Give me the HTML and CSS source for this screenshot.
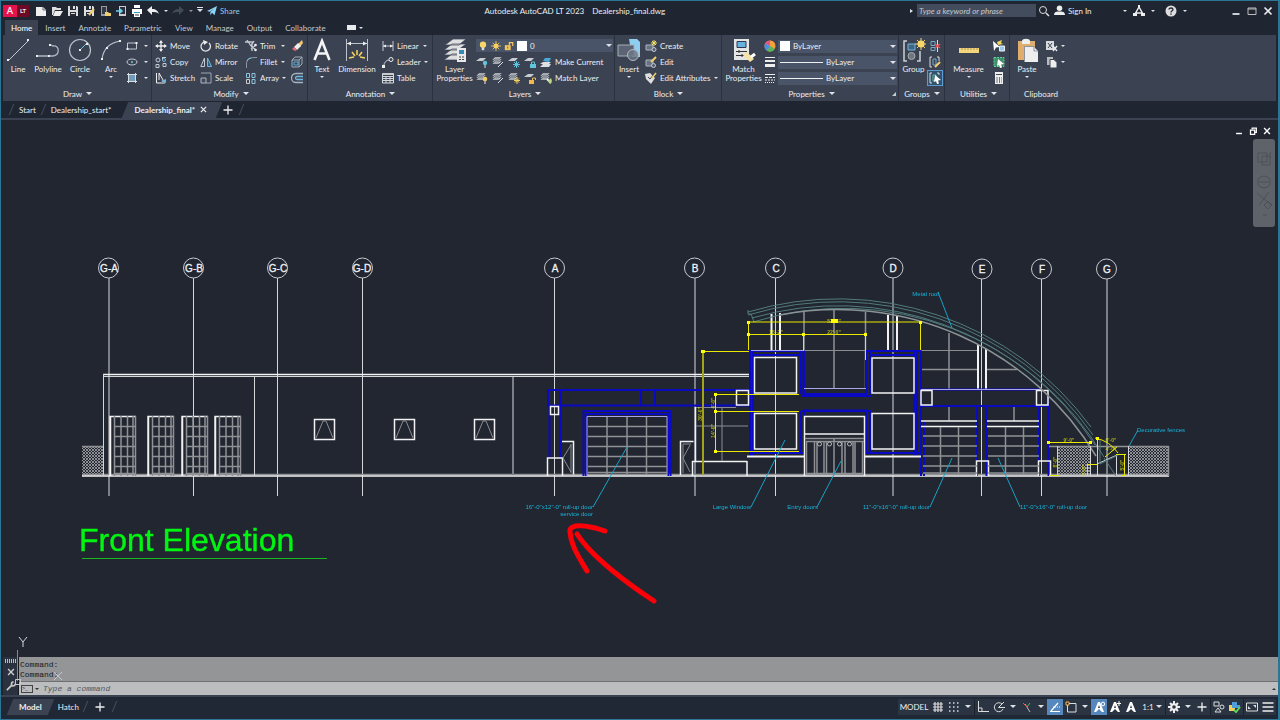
FILE: index.html
```html
<!DOCTYPE html>
<html lang="en">
<head>
  <meta charset="UTF-8">
  <meta name="viewport" content="width=device-width, initial-scale=1">
  <title>Autodesk AutoCAD LT 2023 - Dealership_final.dwg</title>
  <link rel="stylesheet" href="styles.css">
</head>
<body>
  <!-- Icon sprite -->
  <svg class="sprite" aria-hidden="true">
    <symbol id="new" viewBox="0 0 12 12"><path fill="#eee" d="M1 2h7l3 3v6H1z"/><path d="M8 2v3h3" fill="none" stroke="#667"/></symbol>
    <symbol id="open" viewBox="0 0 12 12"><path fill="#ddd" d="M1 2h4l1 1h4v2H4l-2 5H1z"/><path fill="#eee" d="M4 6h8l-3 5H2z"/></symbol>
    <symbol id="save" viewBox="0 0 12 12"><path fill="#ddd" d="M1 1h9l1 1v9H1z"/><path fill="#252c38" d="M3 1h6v4H3zM3 7h6v4H3z"/><path fill="#ddd" d="M6 1h2v3H6zM4 8h4v1H4z"/></symbol>
    <symbol id="saveas" viewBox="0 0 12 12"><use href="#save"/><path d="M6 10l5-6" stroke="#f3cf73" stroke-width="2"/></symbol>
    <symbol id="web" viewBox="0 0 12 12"><path fill="#999" d="M2 1h6v10H2z"/><path fill="#333a45" d="M3 2h4v7H3z"/><path fill="#f3cf73" d="M6 7h3l1 1h2v3H6z"/></symbol>
    <symbol id="mobile" viewBox="0 0 12 12"><path fill="#ccc" d="M4 1h7v10H4z"/><path fill="#29303c" d="M5 2h5v7H5z"/><path fill="none" stroke="#6fd0e8" stroke-width="1.5" d="M1 6h6M5 4l2 2-2 2"/></symbol>
    <symbol id="print" viewBox="0 0 12 12"><path fill="#fff" d="M3 0h6v3H3zM1 4h10v5H1zM3 8h6v4H3z"/><path stroke="#2fa0c8" d="M3 7.500h6"/><path stroke="#333" d="M4 10h4"/></symbol>
    <symbol id="undo" viewBox="0 0 12 12"><path fill="currentColor" d="M0 5l5-4v3c4 0 6 2 7 5-2-2-4-2-7-2v3z"/></symbol>
    <symbol id="plane" viewBox="0 0 12 12"><path fill="#8ed2f5" d="M0 6L12 0 9 11 6 8l-2 3V7l5-4-6 4z"/></symbol>
    <symbol id="search" viewBox="0 0 12 12"><circle cx="5" cy="5" r="3.500" fill="none" stroke="#ddd"/><path stroke="#ddd" stroke-width="1.500" d="M8 8l3 3"/></symbol>
    <symbol id="user" viewBox="0 0 12 12"><circle cx="6" cy="3.500" r="3" fill="#eee"/><path fill="#eee" d="M0 11c0-3 2-4 4-4h4c2 0 4 1 4 4z"/></symbol>
    <symbol id="apps" viewBox="0 0 12 12"><path fill="none" stroke="#eee" stroke-width="1.500" d="M6 2L2 9M6 2l4 7M3 8h6"/><path fill="#eee" d="M5 0h2v3H5zM0 8h4v3H0zM8 8h4v3H8z"/></symbol>
    <symbol id="help" viewBox="0 0 12 12"><circle cx="6" cy="6" r="5.500" fill="#ddd"/><path fill="none" stroke="#222936" stroke-width="1.300" d="M4 4.500c0-2 4-2 4 0 0 1.500-2 1-2 3M6 8.500v1.300"/></symbol>
    <symbol id="min" viewBox="0 0 12 12"><path stroke="currentColor" stroke-width="1.700" d="M2.500 9h7"/></symbol>
    <symbol id="max" viewBox="0 0 12 12"><path fill="none" stroke="#bbb" d="M2 3h8v6.500H2zM2 4h8"/></symbol>
    <symbol id="x" viewBox="0 0 12 12"><path stroke="currentColor" stroke-width="1.600" d="M2.500 2.500l7 7M9.500 2.500l-7 7"/></symbol>
    <symbol id="restore" viewBox="0 0 12 12"><path fill="none" stroke="#fff" stroke-width="1.500" d="M3 5h5v5H3zM5 4V2.500h5v5H8"/></symbol>
    <symbol id="plus" viewBox="0 0 12 12"><path stroke="#eee" stroke-width="1.300" d="M6 1.500v9M1.500 6h9"/></symbol>

    <symbol id="line" viewBox="0 0 24 24"><path stroke="#c5cad2" d="M3 22L22 3"/><path fill="#eee" d="M1 21h2v2H1zM21 1h2v2h-2z"/></symbol>
    <symbol id="polyline" viewBox="0 0 24 24"><path fill="none" stroke="#aeb5c0" stroke-width="1.300" d="M1 18h16c7-1 7-11 0-10l-2-1"/><path fill="#eee" d="M0 17h2v2H0zM12 17h2v2h-2zM13 6h2v2h-2z"/></symbol>
    <symbol id="circle" viewBox="0 0 24 24"><circle cx="12" cy="12" r="10.500" fill="none" stroke="#bcc3cc" stroke-width="1.200"/><path stroke="#73c6e0" d="M12 12l6-6"/><path fill="#eee" d="M11 11h2v2h-2zM18 5h2v2h-2z"/></symbol>
    <symbol id="arc" viewBox="0 0 24 24"><path fill="none" stroke="#bcc3cc" stroke-width="1.200" d="M3 21Q5 6 21 3"/><path fill="#eee" d="M2 20h2v2H2zM7 9h2v2H7zM20 2h2v2h-2z"/></symbol>
    <symbol id="rect" viewBox="0 0 12 12"><path fill="none" stroke="#c5cad2" d="M1.500 3h9v6h-9z"/><path fill="#eee" d="M9.500 2h2v2h-2zM.5 8h2v2h-2z"/></symbol>
    <symbol id="ellipse" viewBox="0 0 12 12"><ellipse cx="6" cy="6" rx="5" ry="3" fill="none" stroke="#c5cad2"/><circle cx="6" cy="6" r="1" fill="#73c6e0"/></symbol>
    <symbol id="hatch" viewBox="0 0 12 12"><path fill="#6f9cbb" d="M3 3h6v6H3z"/><path fill="none" stroke="#d9dde2" d="M2.500 1v10M9.500 1v10M1 2.500h10M1 9.500h10"/></symbol>
    <symbol id="move" viewBox="0 0 12 12"><path stroke="#eee" stroke-width="1.300" d="M6 1v10M1 6h10"/><path fill="#eee" d="M6 0l2 3H4zM6 12l2-3H4zM0 6l3-2v4zM12 6L9 4v4z"/></symbol>
    <symbol id="copy" viewBox="0 0 12 12"><g fill="none" stroke="#c5cad2"><circle cx="3" cy="4" r="2"/><path d="M1 8.500h3v3H1zM7 1.500h4M7.500 1v3M8 7.500h3v3H8z"/><circle cx="9" cy="4" r="1.500" stroke="#73b6dd"/></g></symbol>
    <symbol id="stretch" viewBox="0 0 12 12"><path fill="none" stroke="#eee" d="M1.500 1v10H10M4 1v7M4 1l4 7v2"/><path fill="#73b6dd" d="M6 9l5-2v4z"/></symbol>
    <symbol id="rotate" viewBox="0 0 12 12"><path fill="none" stroke="#eee" stroke-width="1.200" d="M4 2a4.700 4.700 0 1 0 5 1"/><path fill="#eee" d="M3 0l5 2-4 3z"/></symbol>
    <symbol id="mirror" viewBox="0 0 12 12"><path fill="none" stroke="#c5cad2" d="M4.500 2v8.500H.8z"/><path fill="#315f7d" stroke="#73b6dd" d="M7.500 2v8.500h4z"/></symbol>
    <symbol id="scale" viewBox="0 0 12 12"><path fill="none" stroke="#9ea7b5" d="M1 1h10v10H6"/><path fill="#424b5b" stroke="#aeb5c0" d="M1 6h5v5H1z"/></symbol>
    <symbol id="trim" viewBox="0 0 12 12"><path stroke="#c5cad2" stroke-width="1.300" d="M0 2h6M7 1v10M2 0l4 6M5 5l6 5M11 5L6 9M9 1l-3 5"/><circle cx="10.500" cy="5" r="1.300" fill="#eee"/><circle cx="10.500" cy="10" r="1.300" fill="#eee"/></symbol>
    <symbol id="fillet" viewBox="0 0 12 12"><path fill="none" stroke="#8d96a5" d="M1.500 12V7Q2 2 9 1.500h3"/><path fill="none" stroke="#73c6e0" d="M2 5q1-3 4-3"/></symbol>
    <symbol id="array" viewBox="0 0 12 12"><g fill="none" stroke="#8fc4df"><path d="M1.500 1.500h3v4h-3zM7 1.500h3v4H7zM7 7.500h3v4H7z"/><path stroke="#ccc" d="M1.500 7.500h3v4h-3z"/></g></symbol>
    <symbol id="erase" viewBox="0 0 12 12"><path fill="#f2c46d" d="M7 4l4-4 1 3-3 4z"/><path fill="#eee" d="M3 7l4-4 3 3-4 4z"/><path fill="#e86b72" d="M1 9l2-2 3 3-2 1z"/></symbol>
    <symbol id="explode" viewBox="0 0 12 12"><path fill="none" stroke="#9eabb9" d="M1 4h7v7H1zM1 4l3-3h7L8 4M11 1v7l-3 3"/><path fill="none" stroke="#57aee0" d="M3 6h4v3H3z"/></symbol>
    <symbol id="offset" viewBox="0 0 12 12"><path fill="none" stroke="#a7b2c0" stroke-width="1.300" d="M12 1.500H5a4.500 4.500 0 0 0 0 9h7"/><path fill="none" stroke="#73b6dd" stroke-width="1.300" d="M12 4.500H6a1.500 1.500 0 0 0 0 3h6"/></symbol>
    <symbol id="text" viewBox="0 0 24 24"><path fill="none" stroke="#f4f4f4" stroke-width="2.600" d="M4.500 22L12 3l7.500 19M7 15.500h10"/></symbol>
    <symbol id="dimension" viewBox="0 0 24 24"><path fill="none" stroke="#bcc3cc" d="M1.500 1v22M22.500 1v22M2 5.500h20"/><path fill="#eee" d="M2 5.500l4-2v4zM22 5.500l-4-2v4z"/><path stroke="#f3cf5d" stroke-width="1.600" d="M12 12v5M7 14l3 4M17 14l-3 4M4 20l5-1M20 20l-5-1"/></symbol>
    <symbol id="linear" viewBox="0 0 12 12"><path fill="none" stroke="#c5cad2" d="M1 1v10M11 1v10M1 6h10"/><path fill="#eee" d="M1 6l3-1.500v3zM11 6L8 4.500v3z"/></symbol>
    <symbol id="leader" viewBox="0 0 12 12"><path fill="none" stroke="#c5cad2" d="M1.500 10Q3 4 7 4"/><circle cx="9" cy="3.500" r="2" fill="none" stroke="#eee"/><path fill="#eee" d="M0 9h3v3H0z"/></symbol>
    <symbol id="table" viewBox="0 0 12 12"><path fill="none" stroke="#d6d9de" d="M.5 1.500h11v9.500H.5zM.5 4.500h11M.5 6.500h11M.5 8.500h11M4 4v7M8 4v7"/><path fill="#ccc" d="M1 1h10v2H1z"/></symbol>
    <symbol id="layers" viewBox="0 0 24 24"><g fill="#dedfdf" stroke="#3b4353" stroke-width=".7"><path d="M1 22l8-6h14l-8 6zM1 17l8-6h14l-8 6zM1 12l8-6h14l-8 6zM2 7l8-6h13l-7 6z"/></g><path fill="#e9e9e9" d="M14 10h9v14h-9z"/><path fill="#348bb5" d="M16 12h5v4h-5z"/><path stroke="#444" d="M16 19h2M19 19h2M16 21.500h2M19 21.500h2"/></symbol>
    <symbol id="ls" viewBox="0 0 12 12"><path fill="#c9cdd1" stroke="#3b4353" stroke-width=".5" d="M0 8l3-3h7L7 8zM0 6l3-3h7L7 6zM0 4l3-3h7L7 4z"/></symbol>
    <symbol id="l1" viewBox="0 0 12 12"><path fill="#c9cdd1" d="M0 5l4-3h6L7 5z"/><circle cx="9" cy="7" r="2.200" fill="#62c5dc"/><path stroke="#ddd" d="M9 9v3"/></symbol>
    <symbol id="l2" viewBox="0 0 12 12"><use href="#ls"/><path stroke="#ddd" d="M6 11l5-5"/></symbol>
    <symbol id="l3" viewBox="0 0 12 12"><path fill="#c9cdd1" d="M0 5l4-3h6L7 5z"/><path stroke="#5dc0dc" d="M8.500 5v7M5 8.500h7M6 6l5 5M11 6l-5 5"/></symbol>
    <symbol id="l4" viewBox="0 0 12 12"><path fill="#c9cdd1" d="M0 5l4-3h6L7 5z"/><path fill="#62c5dc" d="M6 8h6v4H6z"/><path fill="none" stroke="#62c5dc" d="M7.500 8V6h3v2"/></symbol>
    <symbol id="l5" viewBox="0 0 12 12"><path fill="#dce0e3" d="M0 11l3-3h8l-2 3zM0 8l3-2h8L9 8z"/><path fill="#4aa8d9" d="M3 5l2-3h6L9 6z"/></symbol>
    <symbol id="l6" viewBox="0 0 12 12"><use href="#ls"/><circle cx="9" cy="7" r="2.300" fill="#f3cf5d"/><path stroke="#eee" d="M9 9v3"/></symbol>
    <symbol id="l7" viewBox="0 0 12 12"><use href="#ls"/><path stroke="#f3cf5d" d="M9 5v7M6 8.500h6M7 6.500l4 4M11 6.500l-4 4"/></symbol>
    <symbol id="l8" viewBox="0 0 12 12"><path fill="#c9cdd1" d="M0 5l4-3h6L7 5z"/><path fill="#f3b94d" d="M5 8h5v4H5z"/><path fill="none" stroke="#f3b94d" d="M8.500 8V6h3v2"/></symbol>
    <symbol id="l9" viewBox="0 0 12 12"><use href="#ls"/><path stroke="#eee" stroke-width="2" d="M7 7l4 4"/><path fill="#b8d97a" d="M8 9l3-3 1 3-2 3z"/></symbol>
    <symbol id="bulb" viewBox="0 0 12 12"><circle cx="6" cy="4.500" r="3.800" fill="#f8d568"/><path fill="#ddd" d="M4.500 8h3v3h-3z"/></symbol>
    <symbol id="sun" viewBox="0 0 12 12"><circle cx="6" cy="6" r="3" fill="#f8cf60"/><path stroke="#f8cf60" d="M6 0v12M0 6h12M2 2l8 8M10 2l-8 8"/></symbol>
    <symbol id="lock" viewBox="0 0 12 12"><path fill="#f3c45d" d="M1 5h7v6H1z"/><path fill="none" stroke="#f3c45d" stroke-width="1.500" d="M6.500 5V2h4v4"/><path fill="#555" d="M4 7h1v2H4z"/></symbol>
    <symbol id="insert" viewBox="0 0 24 24"><path fill="#8fcdf1" d="M12 1h8l3 3v15h-8z"/><path fill="#5a6474" stroke="#a6aeb8" d="M1 7h16v11H1z"/><circle cx="16" cy="17" r="5.500" fill="#6d7683" stroke="#b4bac2" fill-opacity=".8"/></symbol>
    <symbol id="create" viewBox="0 0 12 12"><path fill="#687282" stroke="#aeb5c0" d="M1 5h7v5H1z"/><circle cx="9" cy="9.500" r="2" fill="#555f70" stroke="#c5cad2"/><path stroke="#f5e56b" d="M9 0v6M6 3h6M7 1l4 4M11 1L7 5"/></symbol>
    <symbol id="edit" viewBox="0 0 12 12"><path fill="#687282" stroke="#aeb5c0" d="M1 4h7v6H1z"/><circle cx="8.500" cy="9.500" r="2" fill="#555f70" stroke="#c5cad2"/><path stroke="#f5ce6b" stroke-width="2" d="M6 6l5-5"/></symbol>
    <symbol id="attr" viewBox="0 0 12 12"><path fill="#ddd" d="M0 2l5-1 5 5-4 6-5-5z"/><path fill="none" stroke="#444" d="M3 5l2 2 4-5"/><path stroke="#f5ce6b" stroke-width="1.500" d="M7 6l4-5"/></symbol>
    <symbol id="matchprop" viewBox="0 0 24 24"><path fill="#e4e4e4" d="M2 1h15v21H2z"/><path fill="#62b4df" stroke="#335" d="M5 3.500h9v6H5z"/><path stroke="#333" d="M4 13.500h11M4 17.500h8M7 12v3M10 16v3"/><path fill="#f4e3a3" d="M11 17l4-3 7 7-4 3z"/><path stroke="#fff" stroke-width="3" d="M19 19l4-3"/></symbol>
    <symbol id="wheel" viewBox="0 0 12 12"><g fill="none" stroke-width="5.500"><path stroke="#ef5350" d="M6 3.200A2.800 2.800 0 0 1 8.400 4.600"/><circle cx="6" cy="6" r="2.750" stroke="#f6a13b"/><path stroke="#54b95a" d="M8.400 7.400A2.750 2.750 0 0 1 4.600 8.400"/><path stroke="#4a90e2" d="M4.600 8.400A2.750 2.750 0 0 1 3.600 4.600"/><path stroke="#e0548d" d="M3.600 4.600A2.750 2.750 0 0 1 6 3.250"/></g></symbol>
    <symbol id="weight" viewBox="0 0 12 12"><path fill="#eee" d="M1 1h10v1H1zM1 4h10v2H1zM1 8h10v3H1z"/></symbol>
    <symbol id="ltype" viewBox="0 0 12 12"><g fill="none" stroke="#eee"><path d="M1 2.500h10"/><path stroke-dasharray="3 1" d="M1 5.500h10"/><path stroke-dasharray="2 1" d="M1 8h10"/><path stroke-dasharray="1 1" d="M1 10.500h10"/></g></symbol>
    <symbol id="group" viewBox="0 0 24 24"><path fill="none" stroke="#ccd0d6" stroke-width="1.500" d="M5 3H2v20h3M15 23h3V13"/><path fill="#416681" stroke="#73b6dd" d="M6 6h7v6H6z"/><circle cx="9.500" cy="18" r="3.500" fill="#6d7683" stroke="#aaa"/><circle cx="19" cy="6" r="3.500" fill="#f8d568"/><path stroke="#f8d568" d="M19 0v12M13 6h11M15 2l8 8M23 2l-8 8"/></symbol>
    <symbol id="ungroup" viewBox="0 0 12 12"><path fill="none" stroke="#73a9c9" d="M2 1.500h4v4H2zM2 7.500h4v3H2z"/><path stroke="#ddd" d="M8.500 0v12"/><path stroke="#ef5350" stroke-width="1.500" d="M6 4l5 4M11 4L6 8"/></symbol>
    <symbol id="groupedit" viewBox="0 0 12 12"><path fill="none" stroke="#ddd" d="M3 1H1v10h2M8 1h2v4"/><path fill="none" stroke="#73a9c9" d="M4 3h3v6H4z"/><path stroke="#f5ce6b" stroke-width="2" d="M6 11l5-5"/></symbol>
    <symbol id="groupsel" viewBox="0 0 12 12"><path fill="none" stroke="#ddd" d="M3 1H1v10h2M8 1h2v2"/><path fill="none" stroke="#59c495" d="M4 3h3v6H4z"/><path fill="#fff" d="M6 3l6 5-3 .5 1 3-2 .5-1-3-2 1z"/></symbol>
    <symbol id="measure" viewBox="0 0 24 24"><path fill="#f4d67c" d="M2 10h20v5H2z"/><path stroke="#9a844c" stroke-width=".7" d="M5 10v2M8 10v2M11 10v2M14 10v2M17 10v2M20 10v2"/></symbol>
    <symbol id="quick" viewBox="0 0 12 12"><path fill="#fff" d="M0 1l7 6-4 .5L1 11z"/><path fill="#9ac7ed" stroke="#eee" d="M6.500 6h5v5h-5z"/><path fill="#f3d95d" d="M4 2l5-2-1 3 2 1-5 1z"/></symbol>
    <symbol id="selall" viewBox="0 0 12 12"><path fill="#3d8f68" stroke="#5fd19a" stroke-dasharray="2 1" d="M1 1.500h10v9H1z"/><path fill="#fff" d="M5 3l6 5-3 .5 1 3-2 .5-1-3-2 1z"/></symbol>
    <symbol id="calc" viewBox="0 0 12 12"><path fill="#eee" d="M2 0h8v12H2z"/><path fill="none" stroke="#444c5a" d="M3 2.500h6"/><path stroke="#444c5a" stroke-dasharray="1 1.500" stroke-width="1.300" d="M3.500 6H9M3.500 8H9M3.500 10H9"/></symbol>
    <symbol id="paste" viewBox="0 0 24 24"><path fill="#e0ad6e" d="M3 3h17v19H3z"/><path fill="#eee" d="M7 3c0-3 8-3 8 0v3H7zM10 9h9l4 4v11H10z"/><path fill="none" stroke="#8c939b" d="M9.500 24V8.500H19V13h4"/></symbol>
    <symbol id="cut" viewBox="0 0 12 12"><path fill="#d9dadb" d="M0 1h8v9H0z"/><path stroke="#3b4353" d="M2 3l4 5M6 3L2 8"/><path stroke="#eee" stroke-width="1.300" d="M7 6l4 5M11 6l-4 5"/></symbol>
    <symbol id="copyclip" viewBox="0 0 12 12"><path fill="#bbb" d="M1 1h6v8H1z"/><path fill="#eee" stroke="#3b4353" d="M4 3.500h4l3 3V12H4z"/></symbol>

    <symbol id="grid" viewBox="0 0 12 12"><path stroke="#ddd" stroke-width="1.200" d="M3 1v10M6 1v10M9 1v10M1 3h10M1 6h10M1 9h10"/></symbol>
    <symbol id="snap" viewBox="0 0 12 12"><path stroke="#ddd" stroke-width="1.500" stroke-dasharray="1.500 2.500" d="M1 2h10M1 6h10M1 10h10"/></symbol>
    <symbol id="ortho" viewBox="0 0 12 12"><path fill="none" stroke="#ddd" d="M1.500 0v10.500H12M1.500 7H5v3"/></symbol>
    <symbol id="polar" viewBox="0 0 12 12"><path fill="none" stroke="#ddd" d="M9 3a4.500 4.500 0 1 0 1 5M5.500 6.500L11 1M5.500 6.500H12"/></symbol>
    <symbol id="iso" viewBox="0 0 12 12"><path stroke="#bbb" d="M4 3l5 8"/><path stroke="#ef5350" d="M2 2l4 4"/><path stroke="#55b960" d="M6 6l3-4"/></symbol>
    <symbol id="otrack" viewBox="0 0 12 12"><path fill="none" stroke="#fff" stroke-width="1.200" d="M1 10.500h10M2 10L9 2"/><path stroke="#cfe" stroke-dasharray="1 1" d="M4 6h8"/></symbol>
    <symbol id="osnap" viewBox="0 0 12 12"><path fill="none" stroke="#ddd" d="M2.500 2.500H11v8.500H2.500z"/><path fill="#222b38" stroke="#f3b75d" d="M1 1h3v3H1z"/></symbol>
    <symbol id="anno" viewBox="0 0 12 12"><path fill="#fff" d="M5 1h2l4 10H9L6 8l-3 3H1z"/><path fill="#2b3442" d="M6 4l1 3H5z"/></symbol>
    <symbol id="annovis" viewBox="0 0 12 12"><use href="#anno"/><circle cx="10" cy="3" r="1.800" fill="#5d93c7" stroke="#fff"/></symbol>
    <symbol id="annoauto" viewBox="0 0 12 12"><use href="#anno"/><path stroke="#fff" d="M10 0v5M8 2.500h4"/></symbol>
    <symbol id="gear" viewBox="0 0 12 12"><path stroke="#eee" stroke-width="2" d="M6 0v12M0 6h12M2 2l8 8M10 2l-8 8"/><circle cx="6" cy="6" r="3.800" fill="#eee"/><circle cx="6" cy="6" r="1.800" fill="#2b3442"/></symbol>
    <symbol id="isolate" viewBox="0 0 12 12"><path fill="none" stroke="#ddd" d="M1 1h5v4H1zM5 7l3 4H2z"/><circle cx="9" cy="6" r="2" fill="none" stroke="#ddd"/></symbol>
    <symbol id="hw" viewBox="0 0 12 12"><path fill="#f3cf5d" d="M0 4h6v6H0z"/><path fill="#4d9fdb" d="M3 1h5v3h3v3H3z"/><path fill="none" stroke="#5fd15a" stroke-width="2" d="M5 9l2 2 4-5"/></symbol>
    <symbol id="clean" viewBox="0 0 12 12"><path fill="none" stroke="#ddd" d="M.5 2h11v8H.5z"/><path fill="#ddd" d="M7 4h3v3zM2 8h3L2 5z"/></symbol>
    <symbol id="menu" viewBox="0 0 12 12"><path stroke="#eee" stroke-width="1.300" d="M.5 2h11M.5 6h11M.5 10h11"/></symbol>
    <symbol id="wrench" viewBox="0 0 12 12"><path stroke="#ccc" stroke-width="2" d="M1 11l6-6"/><path fill="none" stroke="#ccc" stroke-width="2" d="M9 1C6 1 6 6 8 6s3 0 3-3"/></symbol>
  </svg>

  <div class="window">
    <header class="titlebar">
      <div class="quick">
        <button class="logo" aria-label="Application menu"><b>A</b><i>LT</i></button>
        <button class="slot"><svg><use href="#new"/></svg></button>
        <button class="slot"><svg><use href="#open"/></svg></button>
        <button class="slot"><svg><use href="#save"/></svg></button>
        <button class="slot"><svg><use href="#saveas"/></svg></button>
        <button class="slot"><svg><use href="#web"/></svg></button>
        <button class="slot"><svg><use href="#mobile"/></svg></button>
        <button class="slot"><svg><use href="#print"/></svg></button>
        <button class="slot"><svg><use href="#undo"/></svg></button>
        <button class="drop"><span class="caret"></span></button>
        <button class="slot dim"><svg class="flip"><use href="#undo"/></svg></button>
        <button class="drop dim"><span class="caret"></span></button>
        <button class="drop"><span class="caret big-caret"></span></button>
        <button class="share"><svg><use href="#plane"/></svg>Share</button>
      </div>
      <h1>Autodesk AutoCAD LT 2023 <span>Dealership_final.dwg</span></h1>
      <div class="infobar">
        <span class="arrow-right"></span>
        <input class="search" type="text" placeholder="Type a keyword or phrase" aria-label="Search">
        <button class="slot"><svg><use href="#search"/></svg></button>
        <button class="signin"><svg><use href="#user"/></svg>Sign In<span class="caret"></span></button>
        <button class="slot wide"><svg><use href="#apps"/></svg><span class="caret"></span></button>
        <button class="slot wide split"><svg><use href="#help"/></svg><span class="caret"></span></button>
      </div>
      <div class="winbtns">
        <button class="slot"><svg><use href="#min"/></svg></button>
        <button class="slot"><svg><use href="#max"/></svg></button>
        <button class="slot"><svg><use href="#x"/></svg></button>
      </div>
    </header>

    <nav class="tabs">
      <button class="active">Home</button>
      <button>Insert</button>
      <button>Annotate</button>
      <button>Parametric</button>
      <button>View</button>
      <button>Manage</button>
      <button>Output</button>
      <button>Collaborate</button>
      <button class="minimize"><span></span><i class="caret"></i></button>
    </nav>

    <main class="ribbon">
      <section class="panel draw">
        <div class="body">
          <button class="big"><svg><use href="#line"/></svg>Line</button>
          <button class="big"><svg><use href="#polyline"/></svg>Polyline</button>
          <button class="big"><svg><use href="#circle"/></svg>Circle<span class="caret"></span></button>
          <button class="big"><svg><use href="#arc"/></svg>Arc<span class="caret"></span></button>
          <div class="stack">
            <button><svg><use href="#rect"/></svg><span class="caret"></span></button>
            <button><svg><use href="#ellipse"/></svg><span class="caret"></span></button>
            <button><svg><use href="#hatch"/></svg><span class="caret"></span></button>
          </div>
        </div>
        <button class="title">Draw<span class="caret"></span></button>
      </section>

      <section class="panel modify">
        <div class="body">
          <div class="stack">
            <button><svg><use href="#move"/></svg>Move</button>
            <button><svg><use href="#copy"/></svg>Copy</button>
            <button><svg><use href="#stretch"/></svg>Stretch</button>
          </div>
          <div class="stack">
            <button><svg><use href="#rotate"/></svg>Rotate</button>
            <button><svg><use href="#mirror"/></svg>Mirror</button>
            <button><svg><use href="#scale"/></svg>Scale</button>
          </div>
          <div class="stack">
            <button><svg><use href="#trim"/></svg>Trim<span class="caret"></span></button>
            <button><svg><use href="#fillet"/></svg>Fillet<span class="caret"></span></button>
            <button><svg><use href="#array"/></svg>Array<span class="caret"></span></button>
          </div>
          <div class="stack">
            <button><svg><use href="#erase"/></svg></button>
            <button><svg><use href="#explode"/></svg></button>
            <button><svg><use href="#offset"/></svg></button>
          </div>
        </div>
        <button class="title">Modify<span class="caret"></span></button>
      </section>

      <section class="panel annotation">
        <div class="body">
          <button class="big"><svg><use href="#text"/></svg>Text<span class="caret"></span></button>
          <button class="big"><svg><use href="#dimension"/></svg>Dimension</button>
          <div class="stack">
            <button><svg><use href="#linear"/></svg>Linear<span class="caret"></span></button>
            <button><svg><use href="#leader"/></svg>Leader<span class="caret"></span></button>
            <button><svg><use href="#table"/></svg>Table</button>
          </div>
        </div>
        <button class="title">Annotation<span class="caret"></span></button>
      </section>

      <section class="panel layer">
        <div class="body">
          <button class="big"><svg><use href="#layers"/></svg>Layer<br>Properties</button>
          <div class="tools">
            <div class="combo">
              <svg><use href="#bulb"/></svg><svg><use href="#sun"/></svg><svg><use href="#lock"/></svg><span class="swatch"></span>
              <select aria-label="Layer"><option>0</option></select><span class="caret"></span>
            </div>
            <div class="line">
              <button><svg><use href="#l1"/></svg></button><button><svg><use href="#l2"/></svg></button><button><svg><use href="#l3"/></svg></button><button><svg><use href="#l4"/></svg></button>
              <button><svg><use href="#l5"/></svg>Make Current</button>
            </div>
            <div class="line">
              <button><svg><use href="#l6"/></svg></button><button><svg><use href="#l2"/></svg></button><button><svg><use href="#l7"/></svg></button><button><svg><use href="#l8"/></svg></button>
              <button><svg><use href="#l9"/></svg>Match Layer</button>
            </div>
          </div>
        </div>
        <button class="title">Layers<span class="caret"></span></button>
      </section>

      <section class="panel block">
        <div class="body">
          <button class="big"><svg><use href="#insert"/></svg>Insert<span class="caret"></span></button>
          <div class="stack">
            <button><svg><use href="#create"/></svg>Create</button>
            <button><svg><use href="#edit"/></svg>Edit</button>
            <button><svg><use href="#attr"/></svg>Edit Attributes<span class="caret"></span></button>
          </div>
        </div>
        <button class="title">Block<span class="caret"></span></button>
      </section>

      <section class="panel properties">
        <div class="body">
          <button class="big"><svg><use href="#matchprop"/></svg>Match<br>Properties</button>
          <div class="tools">
            <label class="prop"><svg><use href="#wheel"/></svg><span class="combo"><span class="swatch"></span><select aria-label="Object color"><option>ByLayer</option></select><span class="caret"></span></span></label>
            <label class="prop"><svg><use href="#weight"/></svg><span class="combo"><span class="rule"></span><select aria-label="Lineweight"><option>ByLayer</option></select><span class="caret"></span></span></label>
            <label class="prop"><svg><use href="#ltype"/></svg><span class="combo"><span class="rule"></span><select aria-label="Linetype"><option>ByLayer</option></select><span class="caret"></span></span></label>
          </div>
        </div>
        <button class="title">Properties<span class="caret"></span><span class="launcher"></span></button>
      </section>

      <section class="panel groups">
        <div class="body">
          <button class="big"><svg><use href="#group"/></svg>Group</button>
          <div class="stack">
            <button><svg><use href="#ungroup"/></svg></button>
            <button><svg><use href="#groupedit"/></svg></button>
            <button class="on"><svg><use href="#groupsel"/></svg></button>
          </div>
        </div>
        <button class="title">Groups<span class="caret"></span></button>
      </section>

      <section class="panel utilities">
        <div class="body">
          <button class="big"><svg><use href="#measure"/></svg>Measure<span class="caret"></span></button>
          <div class="stack">
            <button><svg><use href="#quick"/></svg></button>
            <button><svg><use href="#selall"/></svg></button>
            <button><svg><use href="#calc"/></svg></button>
          </div>
        </div>
        <button class="title">Utilities<span class="caret"></span></button>
      </section>

      <section class="panel clipboard">
        <div class="body">
          <button class="big"><svg><use href="#paste"/></svg>Paste<span class="caret"></span></button>
          <div class="stack">
            <button><svg><use href="#cut"/></svg><span class="caret"></span></button>
            <button><svg><use href="#copyclip"/></svg><span class="caret"></span></button>
          </div>
        </div>
        <div class="title">Clipboard</div>
      </section>
    </main>

    <nav class="files">
      <span class="slash"></span>
      <button>Start</button>
      <span class="slash"></span>
      <button>Dealership_start*</button>
      <button class="active">Dealership_final*<svg><use href="#x"/></svg></button>
      <button class="add"><svg><use href="#plus"/></svg></button>
      <span class="slash"></span>
    </nav>

    <section class="canvas">
      <svg class="drawing" viewBox="1 120 1277 537" role="img" aria-label="Front elevation drawing">
        <defs>
          <pattern id="mesh" width="3" height="3" patternUnits="userSpaceOnUse"><path stroke="#a4a6aa" stroke-width=".8" d="M0 0l3 3M3 0L0 3"/></pattern>
          <g id="gdoor">
            <path class="w" d="M0 60V.5h26M.5 0v60"/>
            <path class="g2" d="M4.500 0v60M25.500 0v60M11 0v60M17.500 0v60M23 0v60M4 10.500h22M4 20.500h22M4 30.500h22M4 40.500h22M4 50.500h22M4 57.500h22"/>
          </g>
          <g id="vent"><path class="w" d="M.5 .5h20v20H.5z"/><path class="g" d="M2 19L9 2h3l7 17"/></g>
        </defs>

        <!-- Column grid -->
        <g class="g">
          <path class="w1" d="M193.500 278v218M277.500 278v218M362.500 278v218M554.500 278v218M775.500 278v218M981.500 279v217M1041.500 279v217"/>
          <path class="axis" d="M109 278v218M695 278v218M893 278v218M1107 279v217"/>
        </g>
        <g class="bubble">
          <circle cx="108.500" cy="268" r="10"/><circle cx="193.500" cy="268" r="10"/><circle cx="277.500" cy="268" r="10"/><circle cx="362.500" cy="268" r="10"/>
          <circle cx="554.500" cy="268" r="10"/><circle cx="694.500" cy="268" r="10"/><circle cx="775.500" cy="268" r="10"/><circle cx="893" cy="268" r="10"/>
          <circle cx="982" cy="269" r="10"/><circle cx="1041.500" cy="269" r="10"/><circle cx="1106.500" cy="269" r="10"/>
        </g>
        <g class="gridname">
          <text x="109" y="272">G-A</text><text x="194" y="272">G-B</text><text x="278" y="272">G-C</text><text x="362" y="272">G-D</text>
          <text x="555" y="272">A</text><text x="695" y="272">B</text><text x="776" y="272">C</text><text x="893" y="272">D</text>
          <text x="982" y="273">E</text><text x="1042" y="273">F</text><text x="1107" y="273">G</text>
        </g>

        <!-- Left wing -->
        <path fill="url(#mesh)" d="M82 446h21v30H82z"/>
        <path class="g2" d="M82 446.500h21M82 474.500h1087"/>
        <path class="w" d="M82 476h1087"/>
        <path class="w" d="M103 374.500h646"/>
        <path class="w1" d="M103 376.500h646M103.500 374v102M254.500 377v99"/>
        <path class="axis" d="M513 377v98"/>
        <use href="#gdoor" x="110" y="416"/><use href="#gdoor" x="148" y="416"/><use href="#gdoor" x="182" y="416"/><use href="#gdoor" x="215" y="416"/>
        <use href="#vent" x="314" y="419"/><use href="#vent" x="394" y="419"/><use href="#vent" x="474" y="419"/>

        <!-- Service bay -->
        <path class="b2" d="M547 390h202M547 405.500h202M548 389v17M560.500 389v70M549.500 406v52M641 390v15M655 390v15M583.500 476v-65h87v65M586 476v-62h82v62"/>
        <path class="w" d="M550.500 406.500h8v8h-8zM547.500 476v-18h15v18M562 441.500h11.500v33M680.500 475v-33.500h13M695.500 407v55M692 461.500h55M692.500 461v15M747 461v15"/>
        <path class="g" d="M571 445l-8 13 8 14M690 445l-7 13 7 14M571 444v29M683 444v29M683 444h8M696 407.500h40M722 407v54M696 426h52"/>
        <path class="lav" d="M587 476v-59.500h80V476"/>
        <path class="g2" d="M588 426.500h79M588 436.500h79M588 446.500h79M588 456.500h79M588 466.500h79M588 472.500h79M607 417v57M627 417v57M646.500 417v57"/>

        <!-- Showroom -->
        <path class="g2" d="M804 311v78M834 310v79M865.500 312v77"/>
        <path class="g" d="M749 350.500h230M804 388.500h62"/>
        <path class="g2" d="M921 369.500h57M986 369.500h31M949 333v56M949 407v14M1014 407v14"/>
        <path class="wall" d="M771.500 314v37M780 313v38M888 315v36M897 316v35M978 345v44M986 349v40"/>
        <path class="b2" d="M748.500 351h55v43h63v-43h55M750 351v105M753 351v104M801 351v43M804 351v43M866 351v43M870 351v43M914.500 351v105M917 351v104M921 351v125M753 355h48M870 355h48M801 411v43M804 453v-42.500h62V453M870 411v43M749 453h55M866 453h55M749 455h4M801 396h70M801 411h70M921 406h128M921 389.500h121M977 406v70M986.500 406v70M1039 406v70M1048.500 396v80M924 421v55"/>
        <path class="lav" d="M804 388.500h62M921 389.500h121M751 350.500h52"/>
        <path class="w" d="M754.500 357.500h42V393h-42zM754.500 413.500h42V449h-42zM872 358h42v35h-42zM872 413.500h42V449h-42zM736.500 390.500h12V405h-12zM921 390.500h11V405h-11zM1036.500 390.500H1048V405h-11.500z"/>
        <path class="wall" d="M747 456.500h57M865 456.500h56"/>
        <path class="w" d="M804.500 476v-59.500h60V476M805 434h59M921 421h56M921 426.500h56M987 421h52M987 426.500h52M976.500 476v-15h12v15M1038.500 476v-15h12v15"/>
        <path class="g2" d="M805 438.500h59M806 441.500h58M806.500 441v34M814.500 441v34M817 441v34M824 441v34M826.500 441v34M834 438v37M842 441v34M845 441v34M853 441v34M855 441v34M862.500 441v34M806 473.500h57"/>
        <g class="ring"><circle cx="819.500" cy="444" r="2"/><circle cx="829.500" cy="444" r="2"/><circle cx="839.500" cy="444" r="2"/><circle cx="849.500" cy="444" r="2"/></g>
        <path class="g2" d="M923 436h54M923 446h54M923 456h54M923 466h54M923 473h54M940.500 427v48M958.500 427v48M988 436h51M988 446h51M988 456h51M988 466h51M988 473h51M1005.500 427v48M1023.500 427v48"/>

        <!-- Metal roof -->
        <g class="roof">
          <path d="M748 312A314 314 0 0 1 1091 427"/>
          <path d="M748 315A311 311 0 0 1 1093 435"/>
          <path d="M752 318A307 307 0 0 1 1095 445"/>
          <path d="M753 322A303 303 0 0 1 1104 457"/>
          <path d="M748 310v4h3l3 8"/>
          <path class="soffit" d="M780 315A302 302 0 0 1 1096 456"/>
        </g>

        <!-- Decorative fences -->
        <path fill="url(#mesh)" d="M1057 447h34v28h-34zM1129 447h40v28h-40z"/>
        <path class="g2" d="M1049 446.500h120M1168.500 446v30"/>
        <path class="w1" d="M1090.500 446v30M1097.500 463v13M1116.500 456v20M1128.500 446v30M1097 464l20-9"/>
        <path class="roof" d="M1100 440v24l20-10M1104 458l12 18"/>

        <!-- Dimensions -->
        <path class="y2" d="M703 351v124"/>
        <path class="y" d="M701 351.500h48M748.500 350v-28h172v28M748.500 334.500h117M803.500 333v18M865.500 333v27M715.500 394v58M715 394.500h84M715 411.500h84M715 451.500h84M1048 442.500h43M1057.500 446v30M1049 475.500h10M1087.500 464v12M1087 464.500h10M1097.500 463v-25M1095 438q15 3 23 15M1105 457l12-10M1116 454.500h10M1124.500 454v22M1122 475.500h4"/>
        <path class="tick" d="M701 350h4v3h-4zM747 321h3v3h-3zM919 321h3v3h-3zM747 333h3v3h-3zM802 333h3v3h-3zM864 333h3v3h-3zM714 393h3v3h-3zM714 410h3v3h-3zM714 450h3v3h-3zM1047 441h3v3h-3zM1089 441h3v3h-3zM1096 437h3v3h-3zM831 319h7v4h-7z"/>
        <g class="dim">
          <text x="776" y="334">15'-2"</text><text x="834" y="334">22'-0"</text><text x="834" y="323">53'-0"</text>
          <text transform="translate(702 414) rotate(-90)">30'-0"</text>
          <text transform="translate(715 403) rotate(-90)">4'-0"</text><text transform="translate(715 431) rotate(-90)">14'-0"</text>
          <text x="1069" y="442">9'-0"</text><text x="1111" y="442">6'-0"</text><text x="1111" y="451">4'-0"</text>
          <text transform="translate(1057 462) rotate(-90)">8'-0"</text><text transform="translate(1086 470) rotate(-90)">3'-0"</text><text transform="translate(1124 465) rotate(-90)">5'-0"</text>
        </g>

        <!-- Callouts -->
        <path class="lead" d="M593 507l34-60M751 507l34-67M817 507l24-46M930 507l22-49M1020 507l-22-49M938 292l14 36M1138 430l-9 16"/>
        <g class="note">
          <text x="593" y="509" class="end">16"-0"x12"-0" roll-up door</text><text x="593" y="516" class="end">service door</text>
          <text x="751" y="509" class="end">Large Window</text><text x="818" y="509" class="end">Entry doors</text>
          <text x="930" y="509" class="end">11"-0"x16"-0" roll-up door</text><text x="1020" y="509">11"-0"x16"-0" roll-up door</text>
          <text x="939" y="296" class="end">Metal roof</text><text x="1137" y="432">Decorative fences</text>
        </g>

        <text class="heading" x="79" y="551">Front Elevation</text>
        <path class="underline" d="M82 558.500h245"/>
        <path class="markup" d="M605 531C592 526 568 522 570 532C571 546 580 559 587 571M577 534C592 557 628 584 654 601"/>
      </svg>

      <div class="docbtns">
        <button><svg><use href="#min"/></svg></button>
        <button><svg><use href="#restore"/></svg></button>
        <button><svg><use href="#x"/></svg></button>
      </div>
      <svg class="navbar" viewBox="0 0 22 88"><g fill="none" stroke="#4c5159"><path d="M5 14h9v9H5zM9 17h8v9H9zM17 13v6M5 40q6-6 12 0v6q-6 6-12 0zM5 43h12M4 54l14 12M16 53L6 66M15 62l4 4-4 4-4-4zM10 76h4"/></g></svg>
      <svg class="ucs" viewBox="0 0 60 52"><path fill="none" stroke="#d5d7da" d="M12 5l4 5 4-5M16 10v5"/><path fill="none" stroke="#85888d" d="M10.500 18v31"/><path fill="none" stroke="#c5c7ca" d="M8.500 47.500h5v5h-5zM47 40l8 8M55 40l-8 8"/></svg>
    </section>

    <section class="command">
      <div class="handle">
        <span class="grip"></span>
        <button><svg><use href="#x"/></svg></button>
        <button><svg><use href="#wrench"/></svg></button>
      </div>
      <div class="console">
        <div class="history">Command:<br>Command:</div>
        <div class="prompt">
          <span class="term">&gt;_</span><span class="caret"></span>
          <input type="text" placeholder="Type a command" aria-label="Command">
          <span class="caret up"></span>
        </div>
      </div>
    </section>

    <footer class="status">
      <button class="layout active">Model</button>
      <button class="layout">Hatch</button>
      <span class="slash"></span>
      <button class="slot"><svg><use href="#plus"/></svg></button>
      <span class="slash"></span>
      <div class="toggles">
        <button class="space">MODEL</button>
        <button class="slot"><svg><use href="#grid"/></svg></button>
        <button class="slot"><svg><use href="#snap"/></svg></button>
        <button class="drop"><span class="caret"></span></button>
        <button class="slot split"><svg><use href="#ortho"/></svg></button>
        <button class="slot"><svg><use href="#polar"/></svg></button>
        <button class="drop"><span class="caret"></span></button>
        <button class="slot"><svg><use href="#iso"/></svg></button>
        <button class="drop"><span class="caret"></span></button>
        <button class="slot on"><svg><use href="#otrack"/></svg></button>
        <button class="slot"><svg><use href="#osnap"/></svg></button>
        <button class="drop"><span class="caret"></span></button>
        <button class="slot on"><svg><use href="#annovis"/></svg></button>
        <button class="slot"><svg><use href="#annoauto"/></svg></button>
        <button class="slot"><svg><use href="#anno"/></svg></button>
        <button class="ratio">1:1<span class="caret"></span></button>
        <button class="slot split"><svg><use href="#gear"/></svg></button>
        <button class="drop"><span class="caret"></span></button>
        <button class="slot"><svg><use href="#plus"/></svg></button>
        <button class="slot split"><svg><use href="#isolate"/></svg></button>
        <button class="slot"><svg><use href="#hw"/></svg></button>
        <button class="slot split"><svg><use href="#clean"/></svg></button>
        <button class="slot"><svg><use href="#menu"/></svg></button>
      </div>
    </footer>
  </div>
</body>
</html>
```
FILE: styles.css
```css
* {
  box-sizing: border-box;
}

body {
  margin: 0;
  background: #1f2631;
  color: #eceef1;
  font: 8px/10px Lato, "Open Sans", sans-serif;
}

button,
input,
select {
  margin: 0;
  padding: 0;
  border: 0;
  background: none;
  color: inherit;
  font: inherit;
  outline: none;
}

svg {
  flex: none;
  width: 12px;
  height: 12px;
}

.sprite {
  position: absolute;
  width: 0;
  height: 0;
}

.window {
  display: flex;
  flex-direction: column;
  height: 100vh;
  border: 1px solid #2b7595;
  border-width: 1px 2px 1px 1px;
  overflow: hidden;
}

.caret {
  flex: none;
  display: inline-block;
  border: 2px solid transparent;
  border-top-color: #dfe2e6;
  border-bottom: 0;
}

.slot {
  display: flex;
  align-items: center;
  justify-content: center;
  width: 16px;
  height: 16px;
}

.drop {
  display: flex;
  align-items: center;
  justify-content: center;
  width: 9px;
  height: 16px;
}

.dim {
  color: #596271;
  opacity: 0.6;
}

.slash {
  width: 1px;
  height: 11px;
  background: #47505f;
  transform: skewX(-22deg);
}

/* Title bar */
.titlebar {
  display: flex;
  align-items: center;
  height: 19px;
  padding: 0 2px;
  background: #1f2631;
}

.quick,
.infobar,
.winbtns {
  display: flex;
  align-items: center;
}

.logo {
  display: flex;
  width: 26px;
  height: 12px;
  margin-right: 4px;
  background: #6d0a26;
  line-height: 12px;
}

.logo b {
  width: 14px;
  background: #e5124b;
  font-size: 9px;
}

.logo i {
  width: 12px;
  font-size: 6px;
  font-style: normal;
  font-weight: bold;
}

.flip {
  transform: scaleX(-1);
}

.big-caret {
  position: relative;
  border-width: 3px 3px 0;
}

.big-caret::before {
  content: "";
  position: absolute;
  left: -3px;
  top: -5px;
  width: 6px;
  height: 1px;
  background: #dfe2e6;
}

.share {
  display: flex;
  align-items: center;
  gap: 3px;
  margin-left: 3px;
  color: #8fc9ec;
}

.share svg {
  width: 10px;
  height: 10px;
}

h1 {
  flex: 1;
  margin: 0;
  font-size: 8px;
  font-weight: normal;
  text-align: center;
}

h1 span {
  margin-left: 6px;
}

.arrow-right {
  margin-right: 4px;
  border: 2px solid transparent;
  border-left: 3px solid #dfe2e6;
  border-right: 0;
}

.search {
  width: 119px;
  height: 13px;
  padding: 0 2px;
  background: #434c5c;
}

.search::placeholder {
  color: #c4c8ce;
  font-style: italic;
}

.signin {
  display: flex;
  align-items: center;
  gap: 3px;
  width: 73px;
  margin: 0 5px 0 2px;
}

.signin svg {
  width: 11px;
  height: 11px;
}

.signin .caret {
  margin-left: auto;
}

.wide {
  gap: 6px;
  width: 24px;
  margin-right: 7px;
}

.winbtns {
  margin-left: 34px;
}

/* Ribbon tabs */
.tabs {
  display: flex;
  height: 15px;
  padding-left: 4px;
}

.tabs button {
  padding: 0 6px;
  margin-right: 1px;
  color: #c3c8d0;
}

.tabs .active {
  background: #3b4353;
  color: #fff;
}

.tabs .minimize {
  display: flex;
  align-items: center;
  gap: 3px;
  margin-left: 8px;
}

.minimize span {
  width: 9px;
  height: 5px;
  background: #e8eaed;
}

/* Ribbon */
.ribbon {
  display: flex;
  height: 66px;
  margin: 0 2px;
  background: #3b4353;
}

.panel {
  display: flex;
  flex-direction: column;
  flex: none;
  padding: 3px 0 0 3px;
  border-right: 1px solid #2a3140;
}

.body {
  display: flex;
  height: 48px;
}

.title {
  position: relative;
  display: flex;
  align-items: center;
  justify-content: center;
  gap: 4px;
  height: 15px;
}

.title .caret {
  border-width: 3px 3px 0;
}

.big {
  display: flex;
  flex-direction: column;
  align-items: center;
  line-height: 9px;
}

.big svg {
  width: 24px;
  height: 24px;
  margin: 0 0 3px;
}

.big .caret {
  margin-top: 2px;
}

.stack {
  display: flex;
  flex-direction: column;
}

.stack button,
.line button {
  display: flex;
  align-items: center;
  gap: 3px;
  height: 16px;
  white-space: nowrap;
}

.stack .caret {
  margin-left: auto;
}

.stack .on {
  background: #34516d;
  box-shadow: inset 0 0 0 1px #5b9bd0;
}

.draw,
.annotation,
.block,
.groups { padding-left: 1px; }

.draw { width: 149px; }
.draw .big { width: 32px; }
.draw .big:nth-child(1) { width: 28px; }
.draw .big:nth-child(4) { width: 30px; }
.draw .stack { width: 22px; }

.modify { width: 156px; }
.modify .stack { width: 45px; }
.modify .stack:nth-child(3) { width: 40px; margin-right: 6px; }
.modify .stack:nth-child(4) { width: 14px; }

.annotation { width: 125px; }
.annotation .big { width: 26px; }
.annotation .big:nth-child(2) { width: 44px; }
.annotation .stack { width: 45px; margin-left: 3px; }

.layer { width: 182px; }
.layer .big,
.properties .big { width: 37px; }
.layer .tools { width: 137px; margin-left: 3px; }

.combo {
  position: relative;
  display: flex;
  align-items: center;
  gap: 3px;
  height: 13px;
  padding: 0 1px 0 2px;
  margin: 1px 0 2px;
  background: #4a5468;
}

.combo svg {
  width: 10px;
  height: 10px;
}

.combo select {
  flex: 1;
  min-width: 0;
  height: 13px;
  appearance: none;
}

.combo .caret {
  border-width: 3px 3px 0;
}

.combo .swatch {
  width: 10px;
  height: 10px;
  background: #fff;
}

.line {
  display: flex;
  gap: 4px;
}

.block { width: 107px; }
.block .big { width: 26px; }
.block .stack { width: 73px; margin-left: 3px; }

.properties { width: 177px; }

.properties .tools {
  flex: 1;
}

.prop {
  display: flex;
  align-items: center;
  gap: 2px;
  height: 16px;
  margin-left: 2px;
}

.prop .combo {
  flex: 1;
  margin: 0 1px 0 0;
}

.rule {
  width: 43px;
  height: 1px;
  background: #eee;
}

.launcher {
  position: absolute;
  right: 2px;
  bottom: 5px;
  border: 2px solid transparent;
  border-right-color: #ccc;
  border-bottom-color: #ccc;
}

.groups { width: 46px; }
.groups .big { width: 27px; }
.groups .stack button { width: 16px; justify-content: center; }

.utilities { width: 65px; }
.utilities .big { width: 41px; }
.utilities .stack { margin-left: 4px; }

.clipboard { width: 59px; border-right: 0; }
.clipboard .big { width: 28px; }
.clipboard .stack { width: 19px; margin-left: 5px; }

/* File tabs */
.files {
  display: flex;
  align-items: center;
  height: 19px;
  padding: 0 10px;
  border-bottom: 2px solid #3b4353;
}

.files button {
  height: 16px;
  padding: 0 7px;
}

.files .active {
  position: relative;
  display: flex;
  align-items: center;
  gap: 4px;
  margin-left: 9px;
  padding: 0 7px;
  z-index: 0;
  font-weight: bold;
}

.files .active::before,
.layout.active::before {
  content: "";
  position: absolute;
  inset: 0 -3px;
  z-index: -1;
  background: #3b4353;
  transform: skewX(-22deg);
}

.files .active svg {
  width: 9px;
  height: 9px;
}

.files .add {
  display: flex;
  align-items: center;
}

/* Drawing area */
.canvas {
  position: relative;
  flex: 1;
  min-height: 0;
  background: #212631;
}

.drawing {
  display: block;
  width: 100%;
  height: 100%;
  fill: none;
  font-family: "Liberation Sans", Arial, sans-serif;
}

.w { stroke: #f2f2f2; stroke-width: 1.5; }
.w1 { stroke: #d4d6d9; }
.wall { stroke: #f2f2f2; stroke-width: 2; }
.g { stroke: #8a8d92; }
.g2 { stroke: #8f9194; stroke-width: 1.5; }
.axis { stroke: #7b7f86; stroke-width: 2; }
.b2 { stroke: #0a0ac4; stroke-width: 2; }
.lav { stroke: #aaa6e6; stroke-width: 1; }
.roof { stroke: #527b7c; }
.soffit { stroke: #8a9494; stroke-width: 1.5; }
.y { stroke: #e8e800; }
.y2 { stroke: #a3a31a; stroke-width: 2; }
.tick { fill: #ffff00; }
.ring { stroke: #b5b7ba; }
.lead { stroke: #17a3c8; }
.bubble { stroke: #c5c8cd; }
.underline { stroke: #19b81f; }
.markup { stroke: #fb0007; stroke-width: 5; stroke-linecap: round; stroke-linejoin: round; }

.gridname {
  fill: #f2f3f5;
  stroke: #f2f3f5;
  stroke-width: 0.3;
  font-size: 10px;
  text-anchor: middle;
}

.dim {
  fill: #ffff00;
  font-size: 5px;
  font-weight: bold;
  text-anchor: middle;
}

.note {
  fill: #19b4dc;
  font-size: 6px;
}

.end {
  text-anchor: end;
}

.heading {
  fill: #00f510;
  stroke: #00f510;
  stroke-width: 0.4;
  font-size: 32px;
}

.docbtns {
  position: absolute;
  top: 6px;
  right: 6px;
  display: flex;
  gap: 4px;
  color: #fff;
}

.docbtns svg {
  display: block;
  width: 10px;
  height: 10px;
}

.navbar {
  position: absolute;
  top: 19px;
  right: 3px;
  width: 22px;
  height: 88px;
  border-radius: 3px;
  background: #5e6269;
}

.ucs {
  position: absolute;
  left: 6px;
  bottom: -27px;
  width: 60px;
  height: 52px;
  z-index: 1;
  overflow: visible;
  pointer-events: none;
}

/* Command line */
.command {
  display: flex;
  margin-left: 2px;
  background: #2b323f;
}

.handle {
  display: flex;
  flex-direction: column;
  align-items: center;
  gap: 4px;
  width: 15px;
  padding-top: 2px;
}

.handle svg {
  display: block;
  width: 10px;
  height: 10px;
  color: #ccc;
}

.grip {
  width: 11px;
  height: 4px;
  background: repeating-linear-gradient(90deg, #bbb 0 1px, transparent 1px 2px);
}

.console {
  flex: 1;
  border-left: 1px solid #15181f;
  color: #15171a;
  font-family: "Liberation Mono", monospace;
}

.history {
  height: 24px;
  padding: 3px 1px 1px;
  background: #949597;
}

.prompt {
  display: flex;
  align-items: center;
  gap: 2px;
  height: 14px;
  padding: 0 2px;
  border-top: 1px solid #6f7073;
  background: #bcbdbf;
}

.term {
  width: 12px;
  height: 8px;
  border: 1px solid #444;
  font-size: 5px;
  line-height: 6px;
}

.prompt input {
  flex: 1;
  margin-left: 2px;
}

.prompt input::placeholder {
  color: #55575b;
  font-style: italic;
}

.prompt .caret {
  border-top-color: #333;
}

.prompt .up {
  transform: scaleY(-1);
}

/* Status bar */
.status {
  display: flex;
  align-items: center;
  height: 24px;
  padding: 0 2px 3px 12px;
  border-top: 2px solid #3b4353;
  background: #202835;
}

.layout {
  position: relative;
  z-index: 0;
  height: 16px;
  padding: 0 6px;
}

.layout.active {
  margin-right: 4px;
  font-weight: bold;
}

.status > .slot {
  margin: 0 6px;
}

.toggles {
  display: flex;
  align-items: center;
  margin-left: auto;
}

.toggles button {
  background: #2b3442;
}

.toggles .on {
  background: #5788bd;
}

.toggles .drop {
  width: 12px;
}

.toggles .caret {
  border-width: 3px 3px 0;
}

.split {
  border-left: 1px solid #1a212c;
}

.toggles .split {
  width: 17px;
}

.space {
  width: 32px;
  height: 16px;
}

.ratio {
  display: flex;
  align-items: center;
  justify-content: center;
  gap: 2px;
  width: 26px;
  height: 16px;
}
```
